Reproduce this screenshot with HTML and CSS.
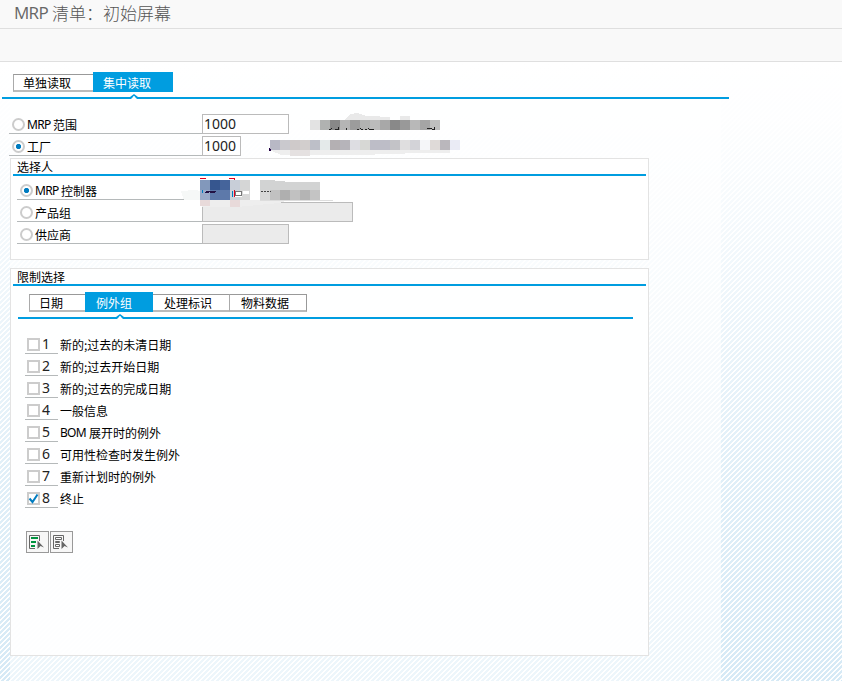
FILE: index.html
```html
<!DOCTYPE html>
<html lang="zh-CN">
<head>
<meta charset="utf-8">
<title>MRP 清单：初始屏幕</title>
<link rel="stylesheet" href="styles.css">
</head>
<body>
<header class="title"><h1><span class="latin">MRP</span><span>清单：初始屏幕</span></h1></header>
<div class="toolbar"></div>
<main class="workspace">
  <div class="veil"></div>
  <nav class="tabs main-tabs">
    <span class="tab">单独读取</span><span class="tab active">集中读取</span>
  </nav>
  <div class="tabline main-line"><svg class="notch" viewBox="0 0 10 5"><path d="M0 5V3H1L5 0L9 3H10V5H8L5 2L2 5Z" fill="#009de0"/><path d="M2 5L5 2L8 5Z" fill="#fff"/></svg></div>

  <section class="fields">
    <div class="row"><label class="name"><i class="radio"></i><b class="lat">MRP</b><span>范围</span></label><span class="input wide">1000</span></div>
    <div class="row"><label class="name"><i class="radio on"></i><span>工厂</span></label><span class="input short">1000</span></div>
  </section>

  <section class="group selector">
    <h2>选择人</h2>
    <div class="row"><label class="name"><i class="radio on"></i><b class="lat">MRP</b><span>控制器</span></label></div>
    <div class="row"><label class="name"><i class="radio"></i><span>产品组</span></label><span class="input disabled long"></span></div>
    <div class="row"><label class="name"><i class="radio"></i><span>供应商</span></label><span class="input disabled wide"></span></div>
  </section>

  <section class="group limits">
    <h2>限制选择</h2>
    <nav class="tabs sub-tabs">
      <span class="tab date">日期</span><span class="tab active exc">例外组</span><span class="tab proc">处理标识</span><span class="tab mat">物料数据</span>
    </nav>
    <div class="tabline sub-line"><svg class="notch" viewBox="0 0 10 5"><path d="M0 5V3H1L5 0L9 3H10V5H8L5 2L2 5Z" fill="#009de0"/><path d="M2 5L5 2L8 5Z" fill="#fff"/></svg></div>
    <ul class="checks">
      <li><label class="check"><i class="box"></i>1</label><span>新的;过去的未清日期</span></li>
      <li><label class="check"><i class="box"></i>2</label><span>新的;过去开始日期</span></li>
      <li><label class="check"><i class="box"></i>3</label><span>新的;过去的完成日期</span></li>
      <li><label class="check"><i class="box"></i>4</label><span>一般信息</span></li>
      <li><label class="check"><i class="box"></i>5</label><b class="lat bom">BOM</b><span>展开时的例外</span></li>
      <li><label class="check"><i class="box"></i>6</label><span>可用性检查时发生例外</span></li>
      <li><label class="check"><i class="box"></i>7</label><span>重新计划时的例外</span></li>
      <li><label class="check"><i class="box"><svg viewBox="0 0 13 13"><path d="M2.500 6.500L5.500 10L10.500 2.500" fill="none" stroke="#007cc0" stroke-width="2"/></svg></i>8</label><span>终止</span></li>
    </ul>
    <div class="buttons">
      <span class="button"><svg viewBox="0 0 21 20"><path d="M8 16.500H2.500V3.500H12.500V9" fill="none" stroke="#666"/><path d="M4 5h7v2H4zM4 9h5v2H4zM4 13h4v2H4z" fill="#00933f"/><path d="M10.500 8.500L17 15.500L13.500 14L10.500 17Z" fill="#666"/></svg></span>
      <span class="button"><svg viewBox="0 0 21 20"><path d="M8 16.500H2.500V3.500H12.500V9" fill="none" stroke="#666"/><path d="M4.500 5.500h6v2h-6zM4.500 9.500h4v1h-4zM4.500 12.500h4v2h-4z" fill="#fff" stroke="#666"/><path d="M10.500 8.500L17 15.500L13.500 14L10.500 17Z" fill="#666"/></svg></span>
    </div>
  </section>

  <svg class="mosaic top" viewBox="260 110 210 50" shape-rendering="crispEdges">
    <path d="M345 120L350 114L358 113L366 116H380V120ZM380 117H390V120H380ZM400 116H410V120H400Z" fill="#e9e9e9"/>
    <path d="M310 120h10v10h-10z" fill="#e3e3e3"/><path d="M320 120h10v10h-10z" fill="#b0b2b1"/><path d="M330 120h10v10h-10z" fill="#888"/><path d="M340 120h10v10h-10z" fill="#b5b5b5"/><path d="M350 120h10v10h-10z" fill="#9c9c9c"/><path d="M360 120h10v10h-10z" fill="#b2b3b2"/><path d="M370 120h10v10h-10z" fill="#bbb"/><path d="M380 120h10v10h-10z" fill="#a8a8a8"/><path d="M390 120h10v10h-10z" fill="#898989"/><path d="M400 120h10v10h-10z" fill="#999"/><path d="M410 120h10v10h-10z" fill="#b8b8b8"/><path d="M420 120h10v10h-10z" fill="#a5a5a5"/><path d="M430 120h10v10h-10z" fill="#bebfbe"/>
    <path d="M329 129.500h2M331 128.500h1M335 129.500h4M338.500 127v3M346.500 128v2M357 129.500h2M360 128.500h1M361 129.500h2M365 129.500h2M368 128.500h1M369 129.500h5M427 128.500h5M432 129.500h2M434.500 127v3" fill="none" stroke="#222"/>
    <path d="M270 150L281 155H360L420 153H450V150Z" fill="#eee"/><path d="M290 150h20v6h-20z" fill="#e5e1e1"/>
    <path d="M270 140h10v10h-10z" fill="#b8b8c5"/><path d="M280 140h10v10h-10z" fill="#cac9ce"/><path d="M290 140h10v10h-10z" fill="#cfcaca"/><path d="M300 140h10v10h-10z" fill="#d2cecd"/><path d="M310 140h10v10h-10z" fill="#bdbfc8"/><path d="M320 140h10v10h-10z" fill="#e4eaea"/><path d="M330 140h10v10h-10z" fill="#b4b0b3"/><path d="M340 140h10v10h-10z" fill="#b6b4ba"/><path d="M350 140h10v10h-10z" fill="#dddde2"/><path d="M360 140h10v10h-10z" fill="#d7d8d5"/><path d="M370 140h20v10h-20z" fill="#bdbdc7"/><path d="M390 140h10v10h-10z" fill="#c3c3c7"/><path d="M400 140h10v10h-10z" fill="#dfdedf"/><path d="M410 140h10v10h-10z" fill="#d3d3d8"/><path d="M420 140h10v10h-10z" fill="#f5f6f9"/><path d="M430 140h10v10h-10z" fill="#dfdad8"/><path d="M440 140h10v10h-10z" fill="#bab7bc"/><path d="M450 140h10v10h-10z" fill="#eaebf5"/>
    <path d="M269 148h1v3h-1zM270 149h1v2h-1z" fill="#204"/>
  </svg>
  <svg class="mosaic mid" viewBox="180 172 160 42" shape-rendering="crispEdges">
    <path d="M181 191L195 190L200 191V200H184Z" fill="#f6f8f7"/>
    <path d="M202 200H290L279 203L237 207H202Z" fill="#eee"/><path d="M260 200H333V201H260Z" fill="#ddd"/>
    <path d="M200 180h10v10h-10z" fill="#8298bb"/><path d="M210 180h10v10h-10z" fill="#36568f"/><path d="M220 180h10v10h-10z" fill="#45649b"/><path d="M230 180h10v10h-10z" fill="#c8ced8"/><path d="M240 180h10v10h-10z" fill="#d5d6d6"/>
    <path d="M200 190h10v10h-10z" fill="#9aabc9"/><path d="M210 190h20v10h-20z" fill="#5d79aa"/><path d="M230 190h10v10h-10z" fill="#ccd2da"/><path d="M240 190h10v10h-10z" fill="#d8d8d8"/>
    <path d="M200 200h10v6h-10zM230 200h10v7h-10z" fill="#e8dada"/>
    <path d="M200 178.500h6M229 178.500h6M234.500 178v2M234.500 190v7" fill="none" stroke="#e00020"/>
    <path d="M202.500 190v3M232.500 191v6" fill="none" stroke="#007cc0"/><path d="M205 192.500h4M206 191.500h10M210 192.500h5" stroke="#214"/>
    <path d="M235 191h7v6h-7z" fill="#fff"/><path d="M235.500 191.500h6v4h-6z" fill="#fff" stroke="#777"/><path d="M243 191h6v3h-6z" fill="#fff"/>
    <path d="M260 180H270L290 182H320V190H260Z" fill="#d2d3d3"/><path d="M260 190h10v10h-10z" fill="#d8d8d8"/><path d="M270 190h10v10h-10zM290 190h10v10h-10z" fill="#c1c1c1"/><path d="M280 190h10v10h-10z" fill="#afafaf"/><path d="M300 190h10v10h-10z" fill="#b4b4b4"/><path d="M310 190h10v10h-10z" fill="#c4c4c4"/>
    <path d="M261 191.500h10" stroke="#444" stroke-dasharray="2 1"/>
  </svg>
</main>
</body>
</html>
```
FILE: styles.css
```css
* { box-sizing: border-box; }
body { margin: 0; width: 842px; height: 681px; overflow: hidden; background: #fff; color: #000; font: 12px/18px "Noto Sans", "Noto Sans CJK SC", sans-serif; }
h1, h2, ul { margin: 0; padding: 0; font-weight: normal; list-style: none; }
span, label { white-space: nowrap; }
.title { height: 29px; padding-left: 14px; background: #f9f9f9; border-bottom: 1px solid #dfdfdf; }
.title h1 { display: flex; gap: 5px; font: 300 17px/25px "Noto Sans CJK SC", sans-serif; color: #555; }
.title .latin { font: 17px/26px "Open Sans", sans-serif; width: 33px; letter-spacing: -.7px; color: #666; }
.toolbar { height: 33px; background: #f9f9f9; border-bottom: 1px solid #dfdfdf; }
.workspace { position: relative; height: 619px; padding-top: 10px;
  background: linear-gradient(to bottom, #fff 0, rgba(255,255,255,.95) 60px, rgba(255,255,255,.65) 220px, rgba(255,255,255,.3) 420px, rgba(255,255,255,.08) 619px),
  repeating-linear-gradient(135deg, #d3e8f5 0, #d3e8f5 1.6px, #fff 2.1px, #fff 3.1px, #d3e8f5 3.5355px); }
.veil { position: absolute; left: 10px; top: 37px; width: 711px; bottom: 0; background: rgba(255,255,255,.56); }
.tabs { position: relative; display: flex; align-items: flex-end; height: 20px; }
.tab { height: 18px; line-height: 16px; background: #fff; border-top: 1px solid #999; border-bottom: 2px solid #bbb; border-left: 1px solid #aaa; padding-left: 9px; font-family: "Noto Sans CJK SC", sans-serif; }
.tab.active { height: 20px; line-height: 21px; padding-left: 10px; background: #009de0; color: #fff; border: 0; }
.main-tabs { margin-left: 13px; }
.main-tabs .tab { width: 80px; }
.tabline { position: relative; height: 2px; background: #009de0; }
.main-line { width: 727px; margin: 5px 0 0 2px; }
.notch { position: absolute; left: 127px; top: -3px; width: 10px; height: 5px; display: block; }
.fields { position: relative; margin: 15px 0 0 9px; }
.row { display: flex; height: 20px; margin-bottom: 2px; }
.name { display: flex; align-items: center; width: 193px; height: 20px; padding: 3px 0 0 3px; border-bottom: 1px solid #b5b9ba; font-family: "Noto Sans CJK SC", sans-serif; }
.name span { line-height: 16px; }
.radio { flex: none; width: 13px; height: 13px; margin: -1px 2px 0 0; border: 2px solid #ccc; border-radius: 50%; background: #fff; }
.radio.on { background: radial-gradient(circle, #007cc0 0 2.2px, #fff 3px); }
.lat { font: 12px/16px "Noto Sans", sans-serif; width: 26px; letter-spacing: -.7px; }
.bom { width: 29px; }
.input { height: 20px; padding-left: 1px; background: #fff; border: 1px solid #bbb; font: 14px/18px "Noto Sans", sans-serif; color: #222; }
.wide { width: 87px; }
.short { width: 39px; }
.long { width: 151px; }
.disabled { background: #ebebeb; }
.group { position: relative; width: 639px; margin-left: 10px; background: rgba(255,255,255,.87); border: 1px solid #e3e3e3; }
.group h2 { margin: 0 2px; padding-left: 4px; height: 17px; line-height: 16px; font-size: 12px; font-family: "Noto Sans CJK SC", sans-serif; border-bottom: 2px solid #009de0; }
.selector { height: 102px; }
.selector .row { margin-left: 6px; }
.selector h2 { margin-bottom: 4px; }
.selector .name { width: 185px; }
.limits { height: 388px; margin-top: 8px; }
.sub-tabs { margin: 6px 0 0 18px; }
.date { width: 56px; }
.tab.active.exc { width: 68px; padding-left: 11px; }
.proc { width: 76px; padding-left: 11px; border-left: 0; }
.mat { width: 78px; padding-left: 11px; border-right: 1px solid #999; }
.sub-line { width: 615px; margin: 5px 0 0 7px; }
.sub-line .notch { left: 97px; }
.checks { margin: 15px 0 0 14px; }
.checks li { display: flex; height: 20px; margin-bottom: 2px; font: 12px/22px "Noto Sans CJK SC", sans-serif; }
.checks .lat { line-height: 22px; }
.check { display: flex; align-items: center; width: 33px; height: 20px; margin-right: 2px; padding: 1px 0 0 2px; border-bottom: 1px solid #b5b9ba; font: 14px/18px "Noto Sans", sans-serif; color: #222; }
.box { flex: none; width: 13px; height: 13px; margin-right: 2px; margin-top: 1px; border: 2px solid #ccc; background: #fff; }
.box svg { display: block; width: 13px; height: 13px; margin: -2px; }
.buttons { display: flex; gap: 1px; margin: 23px 0 0 15px; }
.button { width: 23px; height: 22px; border: 1px solid #999; background: #f7f7f7; }
.button svg { display: block; width: 21px; height: 20px; }
.mosaic { position: absolute; }
.top { left: 260px; top: 48px; width: 210px; height: 50px; }
.mid { left: 180px; top: 110px; width: 160px; height: 42px; }
```
